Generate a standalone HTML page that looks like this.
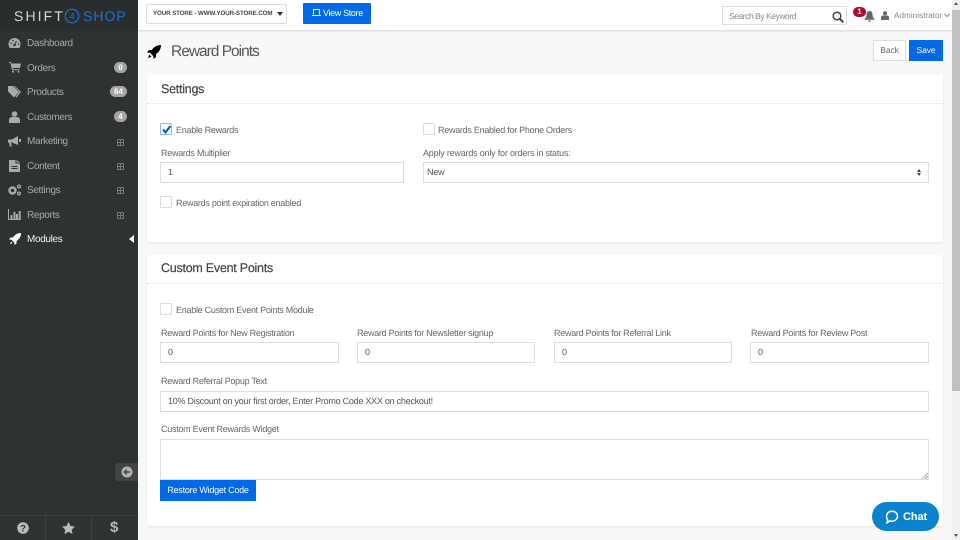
<!DOCTYPE html>
<html><head><meta charset="utf-8"><style>
*{box-sizing:border-box}
html,body{margin:0;padding:0;width:960px;height:540px;overflow:hidden;background:#f8f8f8;font-family:"Liberation Sans",sans-serif;color:#555;text-rendering:geometricPrecision}
.a{position:absolute;white-space:nowrap}
.nav{position:absolute;left:27px;font-size:10px;letter-spacing:-.35px;color:#a9aaaa;line-height:14px}
.bdg{position:absolute;height:11px;border-radius:6px;background:#a5a5a5;color:#fff;font-size:8px;font-weight:bold;line-height:11px;text-align:center}
.pl{position:absolute;left:117px;width:7px;height:7px;border:1px solid #777;border-radius:1px;background:linear-gradient(#777,#777) center/5px 1px no-repeat,linear-gradient(#777,#777) center/1px 5px no-repeat}
.ic{position:absolute;fill:#a9aaaa}
.l{position:absolute;font-size:9px;letter-spacing:-.27px;color:#666;white-space:nowrap;line-height:12px}
.inp{position:absolute;height:21px;border:1px solid #ddd;background:#fff;font-size:9px;letter-spacing:-.25px;color:#555;line-height:19px;padding-left:7px;white-space:nowrap}
.cb{position:absolute;width:12px;height:12px;border:1px solid #ddd;border-radius:1px;background:#fff}
.card{position:absolute;left:147px;width:796px;background:#fff;box-shadow:0 1px 2px rgba(0,0,0,.08)}
.h{position:absolute;left:14px;font-size:12.5px;letter-spacing:-.25px;font-weight:normal;color:#444;-webkit-text-stroke:.2px #444;white-space:nowrap}
.dash{position:absolute;left:0;right:0;border-top:1px dotted #ddd}
</style></head><body>
<div class="a" style="left:138px;top:0;width:814px;height:30px;background:#fff;box-shadow:0 1px 2px rgba(0,0,0,.15)"></div>
<div class="a" style="left:0;top:0;width:138px;height:540px;background:#2f3233"></div>
<div class="a" style="left:0;top:0;width:138px;height:31px;background:#2a2d2e"></div>
<div class="a" style="left:14px;top:8px;font-size:14px;letter-spacing:2.1px;color:#d8d8d8;line-height:16px">SHIFT</div>
<svg class="a" style="left:64px;top:8px" width="16" height="16"><circle cx="8" cy="8" r="6.800" fill="none" stroke="#1f6fd0" stroke-width="1.200"/><text x="8" y="11.500" font-size="9.500" text-anchor="middle" font-family="Liberation Sans" fill="#1f6fd0">4</text></svg>
<div class="a" style="left:83px;top:8px;font-size:14px;letter-spacing:1px;color:#1f6fd0;line-height:16px">SHOP</div>

<svg class="ic" style="left:8px;top:37px" width="13" height="12" viewBox="0 0 13 12"><path d="M6.5 1A6 6 0 0 0 .5 7c0 1.600.5 2.800 1.300 4h9.400c.8-1.200 1.300-2.400 1.300-4a6 6 0 0 0-6-6z"/><circle cx="6.500" cy="8" r="1.300" fill="#2f3233"/><path d="M6.500 8l2-4" stroke="#2f3233"/><circle cx="3" cy="6" r=".8" fill="#2f3233"/><circle cx="5" cy="3.500" r=".8" fill="#2f3233"/><circle cx="10.500" cy="7" r=".8" fill="#2f3233"/></svg>
<div class="nav" style="top:37px">Dashboard</div>
<svg class="ic" style="left:9px;top:62px" width="12" height="11" viewBox="0 0 12 11"><path d="M0 0h2l.5 1.500H12l-1 4.500H3.500l.3 1.300H10.500v1H3L1.500 1H0z"/><circle cx="4" cy="9.800" r="1"/><circle cx="9.500" cy="9.800" r="1"/></svg>
<div class="nav" style="top:62px">Orders</div>
<div class="bdg" style="left:114px;top:62px;width:13px">0</div>
<svg class="ic" style="left:8px;top:86px" width="13" height="12" viewBox="0 0 13 12"><path d="M0 0h5l6 6-5 5.500-6-6z"/><path d="M7 0l6 6-4.500 5.500-1-.8L11.500 6 6 0z"/></svg>
<div class="nav" style="top:86px">Products</div>
<div class="bdg" style="left:110px;top:86px;width:17px">64</div>
<svg class="ic" style="left:9px;top:111px" width="11" height="12" viewBox="0 0 11 12"><circle cx="5.500" cy="3" r="2.800"/><path d="M0 12V9c0-2 1.500-3 3-3h5c1.500 0 3 1 3 3v3z"/></svg>
<div class="nav" style="top:111px">Customers</div>
<div class="bdg" style="left:114px;top:111px;width:13px">4</div>
<svg class="ic" style="left:8px;top:136px" width="13" height="11" viewBox="0 0 13 11"><path d="M0 3.500h4L10 0v9L4 6.500H3L3.800 10.500H1.800L1 6.500H0z"/><path d="M11 3h2v3h-2z"/></svg>
<div class="nav" style="top:135px">Marketing</div><div class="pl" style="top:139px"></div>
<svg class="ic" style="left:9px;top:160px" width="11" height="12" viewBox="0 0 11 12"><path d="M0 0h6.500v3.500H11V12H0z"/><path d="M7.500 0L11 2.500H7.500z"/><path d="M2.500 6h6v1h-6zM2.500 8h6v1h-6z" fill="#2f3233"/></svg>
<div class="nav" style="top:160px">Content</div><div class="pl" style="top:163px"></div>
<svg class="ic" style="left:8px;top:184px" width="13" height="12" viewBox="0 0 13 12"><circle cx="4.500" cy="6.500" r="3" fill="none" stroke="#a9aaaa" stroke-width="2.400"/><circle cx="11" cy="2.500" r="1.400" fill="none" stroke="#a9aaaa" stroke-width="1.300"/><circle cx="11" cy="9.500" r="1.400" fill="none" stroke="#a9aaaa" stroke-width="1.300"/></svg>
<div class="nav" style="top:184px">Settings</div><div class="pl" style="top:187px"></div>
<svg class="ic" style="left:8px;top:209px" width="13" height="11" viewBox="0 0 13 11"><path d="M0 0h1v10h12v1H0z"/><path d="M2.500 6h2v4h-2zM5.500 3h2v7h-2zM8 5h2v5H8zM10.700 2h2v8h-2z"/></svg>
<div class="nav" style="top:209px">Reports</div><div class="pl" style="top:212px"></div>
<svg class="ic" style="left:9px;top:233px;fill:#fff" width="12" height="12" viewBox="0 0 12 12"><path d="M12 0C8.500 0 6 1.500 4 4.500H1.500L0 6.500l2.500.3 2.700 2.700.3 2.500 2-1.500V8c3-2 4.500-4.500 4.500-8z"/><path d="M2 8.500L3.500 10 1 11z"/></svg>
<div class="nav" style="top:233px;color:#f0f0f0">Modules</div>
<div class="a" style="left:129px;top:235px;width:0;height:0;border-top:4px solid transparent;border-bottom:4px solid transparent;border-right:5px solid #fff"></div>

<div class="a" style="left:115px;top:463px;width:23px;height:18px;background:#424546;border-radius:3px 0 0 3px"></div>
<svg class="a" style="left:121px;top:466px" width="12" height="12" viewBox="0 0 12 12"><circle cx="6" cy="6" r="5.500" fill="#b5b5b5"/><path d="M9 6H3.500M5.800 3.500L3.300 6l2.500 2.500" stroke="#424546" stroke-width="1.500" fill="none"/></svg>
<div class="a" style="left:0;top:515px;width:138px;height:1px;background:#3d4041"></div>
<div class="a" style="left:45px;top:515px;width:1px;height:25px;background:#3d4041"></div>
<div class="a" style="left:91px;top:515px;width:1px;height:25px;background:#3d4041"></div>
<svg class="a" style="left:17px;top:522px" width="12" height="12" viewBox="0 0 12 12"><circle cx="6" cy="6" r="5.800" fill="#bbb"/><text x="6" y="9.500" font-size="9.500" font-weight="bold" text-anchor="middle" font-family="Liberation Sans" fill="#2f3233">?</text></svg>
<svg class="a" style="left:62px;top:522px" width="13" height="12" viewBox="0 0 13 12"><path fill="#bbb" d="M6.500 0l2 4 4.500.6-3.300 3.100.8 4.300-4-2.100-4 2.100.8-4.300L0 4.600 4.500 4z"/></svg>
<div class="a" style="left:110px;top:519px;font-size:15px;font-weight:bold;color:#bbb;line-height:17px">$</div>

<div class="a" style="left:146px;top:4px;width:141px;height:20px;background:#fff;border:1px solid #ddd;border-radius:2px"></div>
<div class="a" style="left:153px;top:9px;font-size:6.200px;font-weight:bold;letter-spacing:-.1px;color:#444;line-height:10px">YOUR STORE - WWW.YOUR-STORE.COM</div>
<div class="a" style="left:277px;top:12px;width:0;height:0;border-left:3px solid transparent;border-right:3px solid transparent;border-top:4px solid #333"></div>
<div class="a" style="left:303px;top:3px;width:68px;height:21px;background:#0069e8;border-radius:1px"></div>
<svg class="a" style="left:312px;top:9px" width="9" height="8" viewBox="0 0 9 8"><path fill="#fff" d="M1 0h7v5.500H7V1H2v4.500H1zM0 6h9v1H0z"/></svg>
<div class="a" style="left:323px;top:7px;font-size:9px;letter-spacing:-.35px;color:#fff;line-height:13px">View Store</div>

<div class="a" style="left:722px;top:6px;width:125px;height:19px;background:#fff;border:1px solid #ddd"></div>
<div class="a" style="left:729px;top:10px;font-size:8.500px;letter-spacing:-.45px;color:#888;line-height:12px">Search By Keyword</div>
<svg class="a" style="left:832px;top:11px" width="12" height="12" viewBox="0 0 12 12"><circle cx="5" cy="5" r="3.800" fill="none" stroke="#444" stroke-width="1.500"/><path d="M8 8l3.300 3.300" stroke="#444" stroke-width="2"/></svg>
<svg class="a" style="left:864px;top:10px" width="11" height="12" viewBox="0 0 11 12"><path fill="#666" d="M5.500 1C3.500 1 2.500 2.500 2.500 4.500c0 2.500-1 3.500-2 4.500v.8h10V9c-1-1-2-2-2-4.500C8.500 2.500 7.500 1 5.500 1zM4 10.500h3c0 .8-.7 1.300-1.500 1.300S4 11.300 4 10.500z"/></svg>
<div class="a" style="left:853px;top:7px;width:13px;height:10px;border-radius:6px;background:#a80d2f;color:#fff;font-size:8px;font-weight:bold;line-height:10px;text-align:center">1</div>
<svg class="a" style="left:881px;top:11px" width="8" height="9" viewBox="0 0 8 9"><circle cx="4" cy="2.200" r="2" fill="#666"/><path fill="#666" d="M0 9V6.500C0 5 1 4.500 2 4.500h4c1 0 2 .5 2 2V9z"/></svg>
<div class="a" style="left:894px;top:10px;font-size:8.200px;color:#888;line-height:11px">Administrator</div>
<svg class="a" style="left:944px;top:13px" width="6" height="5"><path d="M.5 1L3 3.500 5.500 1" stroke="#888" fill="none"/></svg>

<svg class="a" style="left:147px;top:45px" width="14" height="14" viewBox="0 0 14 14"><path fill="#000" d="M14 0C10 0 7 1.800 4.800 5H2L0 7.500l3 .3 3.200 3.200.3 3L9 12V9c3.200-2.200 5-5 5-9z"/><path fill="#000" d="M2.300 9.500L4.500 11.700 1 13z"/></svg>
<div class="a" style="left:171px;top:41px;font-size:15.500px;letter-spacing:-1px;color:#555;line-height:21px">Reward Points</div>
<div class="a" style="left:873px;top:40px;width:33px;height:21px;background:#fff;border:1px solid #ddd;font-size:8.500px;letter-spacing:-.1px;color:#666;line-height:19px;text-align:center">Back</div>
<div class="a" style="left:909px;top:40px;width:34px;height:21px;background:#0069e8;font-size:8.500px;letter-spacing:-.1px;color:#fff;line-height:21px;text-align:center">Save</div>

<div class="card" style="top:75px;height:167px">
 <div class="h" style="top:6px;line-height:16px">Settings</div>
 <div class="dash" style="top:28px"></div>
</div>
<div class="cb" style="left:160px;top:123px;border:1.500px solid #8bb8ee"></div>
<svg class="a" style="left:161px;top:124px" width="11" height="11" viewBox="0 0 11 11"><path d="M2 5.500l2.500 2.800L9.500 2" stroke="#0a5fd0" stroke-width="2.200" fill="none"/></svg>
<div class="l" style="left:176px;top:124px">Enable Rewards</div>
<div class="cb" style="left:423px;top:123px"></div>
<div class="l" style="left:438px;top:124px">Rewards Enabled for Phone Orders</div>
<div class="l" style="left:161px;top:147px">Rewards Multiplier</div>
<div class="l" style="left:423px;top:147px;letter-spacing:-.2px">Apply rewards only for orders in status:</div>
<div class="inp" style="left:160px;top:162px;width:244px">1</div>
<div class="inp" style="left:423px;top:162px;width:506px;padding-left:3px">New</div>
<div class="a" style="left:917px;top:169px;width:0;height:0;border-left:2.500px solid transparent;border-right:2.500px solid transparent;border-bottom:3px solid #444"></div>
<div class="a" style="left:917px;top:173px;width:0;height:0;border-left:2.500px solid transparent;border-right:2.500px solid transparent;border-top:3px solid #444"></div>
<div class="cb" style="left:160px;top:196px"></div>
<div class="l" style="left:176px;top:197px">Rewards point expiration enabled</div>

<div class="card" style="top:255px;height:271px">
 <div class="h" style="top:5px;line-height:16px">Custom Event Points</div>
 <div class="dash" style="top:28px"></div>
</div>
<div class="cb" style="left:160px;top:303px"></div>
<div class="l" style="left:176px;top:304px">Enable Custom Event Points Module</div>
<div class="l" style="left:161px;top:327px">Reward Points for New Registration</div>
<div class="l" style="left:357px;top:327px">Reward Points for Newsletter signup</div>
<div class="l" style="left:554px;top:327px">Reward Points for Referral Link</div>
<div class="l" style="left:751px;top:327px">Reward Points for Review Post</div>
<div class="inp" style="left:160px;top:342px;width:179px">0</div>
<div class="inp" style="left:357px;top:342px;width:178px">0</div>
<div class="inp" style="left:554px;top:342px;width:178px">0</div>
<div class="inp" style="left:750px;top:342px;width:179px">0</div>
<div class="l" style="left:161px;top:375px">Reward Referral Popup Text</div>
<div class="inp" style="left:160px;top:391px;width:769px">10% Discount on your first order, Enter Promo Code XXX on checkout!</div>
<div class="l" style="left:161px;top:423px">Custom Event Rewards Widget</div>
<div class="inp" style="left:160px;top:439px;width:769px;height:41px"></div>
<svg class="a" style="left:922px;top:473px" width="6" height="6"><path d="M0 6L6 0M3 6L6 3" stroke="#aaa"/></svg>
<div class="a" style="left:160px;top:480px;width:96px;height:21px;background:#0069e8;font-size:9px;letter-spacing:-.25px;color:#fff;line-height:20px;text-align:center">Restore Widget Code</div>

<div class="a" style="left:952px;top:0;width:8px;height:540px;background:#f1f1f1"></div>
<div class="a" style="left:952px;top:10px;width:8px;height:381px;background:#c1c1c1"></div>
<div class="a" style="left:954px;top:2px;width:0;height:0;border-left:2.500px solid transparent;border-right:2.500px solid transparent;border-bottom:3px solid #555"></div>
<div class="a" style="left:954px;top:534px;width:0;height:0;border-left:2.500px solid transparent;border-right:2.500px solid transparent;border-top:3px solid #555"></div>

<div class="a" style="left:872px;top:502px;width:67px;height:29px;border-radius:15px;background:#0a83cc"></div>
<svg class="a" style="left:885px;top:510px" width="14" height="14" viewBox="0 0 14 14"><path d="M7 1.200c3 0 5.500 2.200 5.500 5s-2.500 5-5.500 5c-.8 0-1.500-.1-2.200-.4L2 12.800l.7-2.800C1.900 9 1.500 7.700 1.500 6.200c0-2.800 2.500-5 5.500-5z" fill="none" stroke="#fff" stroke-width="1.500"/></svg>
<div class="a" style="left:903px;top:510px;font-size:11px;font-weight:bold;letter-spacing:-.1px;color:#fff;line-height:14px">Chat</div>
</body></html>
